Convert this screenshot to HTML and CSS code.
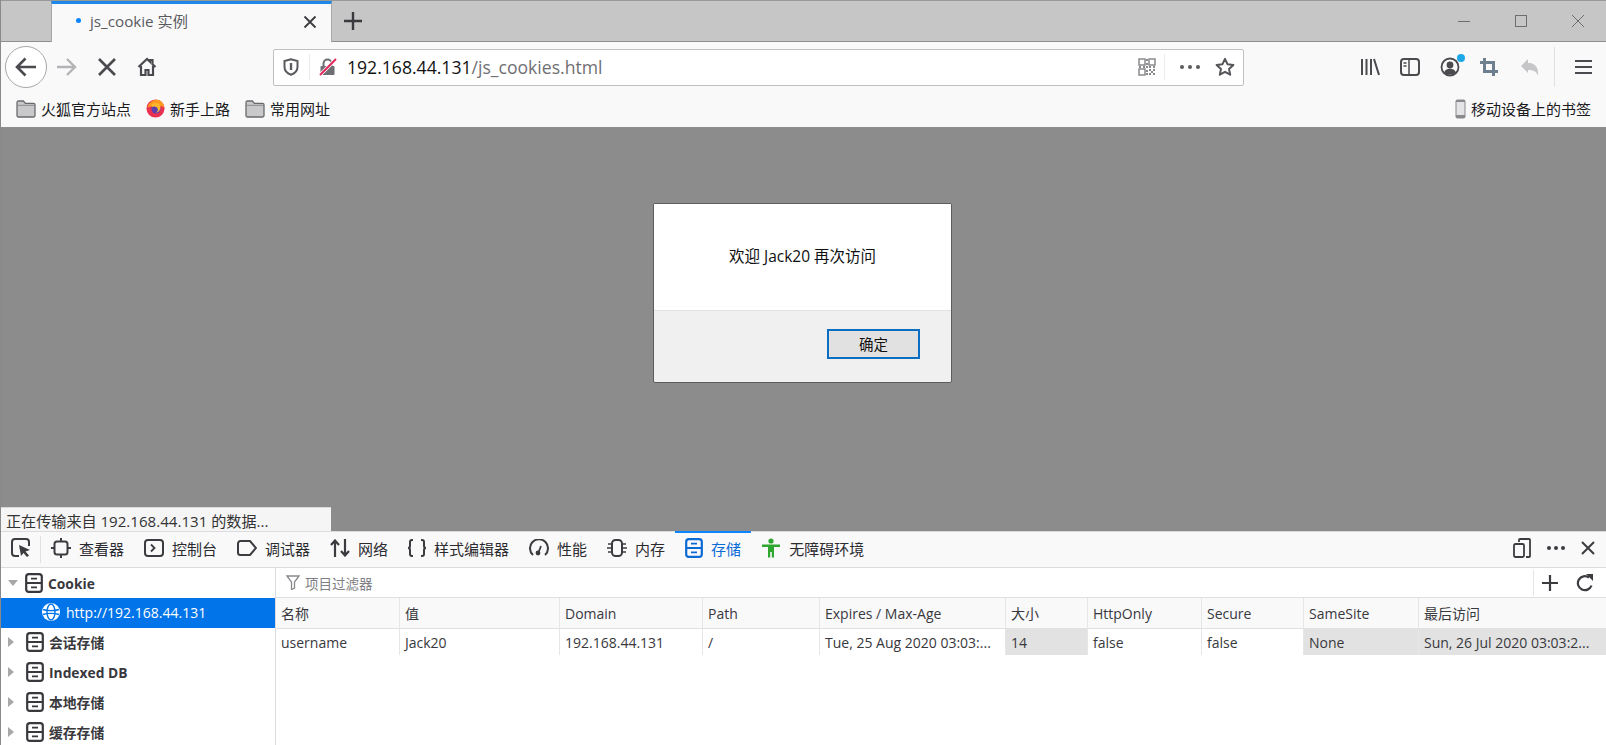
FILE: index.html
```html
<!DOCTYPE html>
<html lang="zh-CN">
<head>
<meta charset="utf-8">
<title>js_cookie 实例</title>
<link rel="stylesheet" href="styles.css">
</head>
<body>
<svg class="defs" width="0" height="0">
  <symbol id="store" viewBox="0 0 18 20"><rect x="1.2" y="1.2" width="15.6" height="17.6" rx="2.6" fill="none" stroke="currentColor" stroke-width="2.2"/><path d="M1 10h16M6 5.6h6M6 14.4h6" fill="none" stroke="currentColor" stroke-width="1.8"/></symbol>
  <symbol id="folder" viewBox="0 0 20 18"><path d="M1 4V2.4C1 1.6 1.6 1 2.4 1h5l2 2.4h8.200c.8 0 1.400.6 1.400 1.400V15.600c0 .8-.6 1.400-1.400 1.400H2.400C1.600 17 1 16.400 1 15.600Z" fill="#c9c9cb" stroke="#6a6a6e" stroke-width="1.300"/><path d="M1.500 5.300h17" stroke="#8b8b8f" stroke-width="1"/></symbol>
</svg>
<div class="window">
  <header class="tabstrip">
    <div class="tab">
      <span class="tab-dot"></span>
      <span class="tab-title">js_cookie 实例</span>
      <svg class="tab-close" width="14" height="14" viewBox="0 0 14 14"><path d="M1.500 1.500l11 11M12.500 1.500l-11 11" stroke="#3c3c40" stroke-width="1.800"/></svg>
    </div>
    <svg class="newtab" width="18" height="18" viewBox="0 0 18 18"><path d="M9 0v18M0 9h18" stroke="#3a3a3e" stroke-width="2.400"/></svg>
    <div class="winctl">
      <svg width="14" height="14" viewBox="0 0 14 14"><path d="M1 7.500h12" stroke="#6d6d6d" stroke-width="1"/></svg>
      <svg width="14" height="14" viewBox="0 0 14 14"><rect x="1.500" y="1.500" width="11" height="11" fill="none" stroke="#6d6d6d"/></svg>
      <svg width="14" height="14" viewBox="0 0 14 14"><path d="M1 1l12 12M13 1L1 13" stroke="#6d6d6d" stroke-width="1"/></svg>
    </div>
  </header>

  <nav class="navbar">
    <div class="back"><svg width="24" height="22" viewBox="0 0 24 22"><path d="M22 11H3M11.500 2.500L3 11l8.500 8.500" fill="none" stroke="#4a4a4f" stroke-width="2.600"/></svg></div>
    <svg class="nav-forward" width="22" height="20" viewBox="0 0 22 20"><path d="M1 10h18M11 2l8 8-8 8" fill="none" stroke="#b4b4b6" stroke-width="2.400"/></svg>
    <svg class="nav-stop" width="18" height="18" viewBox="0 0 18 18"><path d="M1 1l16 16M17 1L1 17" stroke="#4a4a4f" stroke-width="2.600"/></svg>
    <svg class="nav-home" width="20" height="20" viewBox="0 0 20 20"><path d="M1.500 10L10 2l3 2.800V3h2.500v4.200L18.500 10M4 9v9h4.500v-5h3v5H16V9" fill="none" stroke="#4a4a4f" stroke-width="2.200"/></svg>
    <div class="urlbar">
      <svg class="url-shield" width="16" height="18" viewBox="0 0 16 18"><path d="M8 1.200L1.500 3v6c0 3.800 3 6.500 6.500 7.800 3.500-1.300 6.500-4 6.500-7.800V3Z" fill="none" stroke="#5b5b5f" stroke-width="2"/><path d="M8 5v7" stroke="#5b5b5f" stroke-width="2.400"/></svg>
      <i class="url-sep"></i>
      <svg class="url-lock" width="18" height="18" viewBox="0 0 18 18"><rect x="1.500" y="8" width="14" height="9" rx="1" fill="#6f6f73"/><path d="M4.500 8V5.500a4 4 0 0 1 8 0V8" fill="none" stroke="#6f6f73" stroke-width="2"/><path d="M1 17L17 1" stroke="#fff" stroke-width="3.500"/><path d="M1 17L17 1" stroke="#e0255a" stroke-width="2"/></svg>
      <span class="url-text"><span class="url-host">192.168.44.131</span>/js_cookies.html</span>
      <svg class="url-qr" width="18" height="18" viewBox="0 0 18 18"><path d="M1 1h6v6H1zM11 1h6v6h-6zM1 11h6v6H1z" fill="none" stroke="#8a8a8e" stroke-width="1.500"/><path d="M8 1h2v2H8zM8 5h2v2H8zM1 8h2v2H1zM5 8h2v2H5zM8 8h2v2H8zM11 8h2v2h-2zM15 8h2v2h-2zM8 12h2v2H8zM8 15h2v2H8zM11 11h2v2h-2zM15 11h2v2h-2zM13 13h2v2h-2zM11 15h2v2h-2zM15 15h2v2h-2z" fill="#8a8a8e"/></svg>
      <i class="url-sep2"></i>
      <svg class="url-dots" width="20" height="4" viewBox="0 0 20 4"><circle cx="2" cy="2" r="2" fill="#5b5b5f"/><circle cx="10" cy="2" r="2" fill="#5b5b5f"/><circle cx="18" cy="2" r="2" fill="#5b5b5f"/></svg>
      <svg class="url-star" width="20" height="20" viewBox="0 0 20 20"><path d="M10 1.800l2.500 5.400 5.900.7-4.400 4 1.200 5.800L10 14.800l-5.200 2.900L6 11.900l-4.400-4 5.900-.7Z" fill="none" stroke="#55555a" stroke-width="2" stroke-linejoin="round"/></svg>
    </div>
    <div class="nav-right">
      <svg width="20" height="18" viewBox="0 0 20 18"><path d="M2 1v16M6.500 1v16M11 1v16M14 1l5 16" stroke="#4a4a4f" stroke-width="2"/></svg>
      <svg width="20" height="18" viewBox="0 0 20 18"><rect x="1" y="1" width="18" height="16" rx="3" fill="none" stroke="#4a4a4f" stroke-width="2"/><path d="M9 1v16" stroke="#4a4a4f" stroke-width="1.500"/><path d="M3.500 5h3M3.500 8h3" stroke="#4a4a4f" stroke-width="1.500"/></svg>
      <span class="acct"><svg width="20" height="20" viewBox="0 0 20 20"><circle cx="10" cy="10" r="8.500" fill="none" stroke="#4a4a4f" stroke-width="1.800"/><circle cx="10" cy="8" r="3.400" fill="#4a4a4f"/><path d="M4 15.500c1-3 3.500-3.800 6-3.800s5 .8 6 3.800l-3 2h-6Z" fill="#4a4a4f"/></svg><i class="acct-dot"></i></span>
      <svg width="18" height="18" viewBox="0 0 18 18"><path d="M4.500 0v13.500H18M0 4.500h13.500V18" fill="none" stroke="#6e7f90" stroke-width="3"/></svg>
      <svg class="nav-undo" width="18" height="17" viewBox="0 0 18 17"><path d="M0 7l7-7v4c6 0 11 3 10 13-1-4-4-6-10-6v3Z" fill="#c6c6c8"/></svg>
      <i class="nav-sep"></i>
      <svg class="nav-menu" width="17" height="16" viewBox="0 0 17 16"><path d="M0 2h17M0 8h17M0 14h17" stroke="#4a4a4f" stroke-width="2.200"/></svg>
    </div>
  </nav>

  <div class="bookmarks">
    <div class="bm bm-a"><svg width="20" height="18"><use href="#folder"/></svg>火狐官方站点</div>
    <div class="bm bm-b"><svg width="19" height="19" viewBox="0 0 20 20"><circle cx="10" cy="10" r="9.500" fill="#e8324f"/><path d="M1.500 9C3 3 8 .5 12 .7c4 .5 7 4 7.300 8.300-2-2-3.500-1-5.300-2-2-1.500-3-1-4.500-.5Z" fill="#ff9a1f"/><circle cx="10.500" cy="10.500" r="4.800" fill="#5a3fb0"/><path d="M6 6c3-3 8-2 9 1 1 3-1 7-5 7.500 3-1 3-4 1.500-5.500C10 7.500 8 7.500 6 8.500Z" fill="#ffb62e"/></svg>新手上路</div>
    <div class="bm bm-c"><svg width="20" height="18"><use href="#folder"/></svg>常用网址</div>
    <div class="bm bm-d"><svg width="11" height="20" viewBox="0 0 11 20"><rect x="0.500" y="0.500" width="10" height="19" rx="2" fill="#8a8a8e"/><rect x="1.500" y="3" width="8" height="13" fill="#e4e4e6"/></svg>移动设备上的书签</div>
  </div>

  <main class="content">
    <div class="dialog">
      <div class="dialog-msg">欢迎 Jack20 再次访问</div>
      <div class="dialog-foot"><button class="dialog-btn" type="button">确定</button></div>
    </div>
    <div class="status">正在传输来自 192.168.44.131 的数据...</div>
  </main>

  <section class="devtools">
    <div class="dt-toolbar">
      <div class="dt-pick"><svg width="20" height="20" viewBox="0 0 20 20"><path d="M8 18H4a3 3 0 0 1-3-3V4a3 3 0 0 1 3-3h11a3 3 0 0 1 3 3v4" fill="none" stroke="#3c3c40" stroke-width="2"/><path d="M8 7l11 5-4.500 1.500 3.500 4-2 1.500-3.500-4L10 18Z" fill="#3c3c40"/></svg></div>
      <div class="dt-tab"><svg width="20" height="20" viewBox="0 0 20 20"><rect x="3.500" y="3.500" width="13" height="13" rx="2.500" fill="none" stroke="#3c3c40" stroke-width="2"/><path d="M10 0v3M10 17v3M0 10h3M17 10h3" stroke="#3c3c40" stroke-width="2"/></svg>查看器</div>
      <div class="dt-tab"><svg width="20" height="18" viewBox="0 0 20 18"><rect x="1" y="1" width="18" height="16" rx="3" fill="none" stroke="#3c3c40" stroke-width="2"/><path d="M7 5.500L10.500 9 7 12.500" fill="none" stroke="#3c3c40" stroke-width="1.800"/></svg>控制台</div>
      <div class="dt-tab"><svg width="20" height="16" viewBox="0 0 20 16"><path d="M3.500 1H13l6 7-6 7H3.500A2.500 2.500 0 0 1 1 12.500v-9A2.500 2.500 0 0 1 3.500 1Z" fill="none" stroke="#3c3c40" stroke-width="2"/></svg>调试器</div>
      <div class="dt-tab"><svg width="20" height="18" viewBox="0 0 20 18"><path d="M5 18V2M1 6l4-4.500L9 6M15 0v16M11 12l4 4.500 4-4.500" fill="none" stroke="#3c3c40" stroke-width="2.200"/></svg>网络</div>
      <div class="dt-tab dt-braces"><svg width="20" height="18" viewBox="0 0 20 18"><path d="M6 1H5C3.500 1 3 2 3 3v4c0 1-1 2-2 2 1 0 2 1 2 2v4c0 1 .5 2 2 2h1M14 1h1c1.500 0 2 1 2 2v4c0 1 1 2 2 2-1 0-2 1-2 2v4c0 1-.5 2-2 2h-1" fill="none" stroke="#3c3c40" stroke-width="2"/></svg>样式编辑器</div>
      <div class="dt-tab"><svg width="20" height="18" viewBox="0 0 20 18"><path d="M4 16A9 9 0 1 1 16 16" fill="none" stroke="#3c3c40" stroke-width="2"/><circle cx="9" cy="14" r="2.400" fill="#3c3c40"/><path d="M9.500 13.500L12 7" stroke="#3c3c40" stroke-width="1.800"/></svg>性能</div>
      <div class="dt-tab"><svg width="20" height="18" viewBox="0 0 20 18"><rect x="5" y="1" width="10" height="16" rx="3.500" fill="none" stroke="#3c3c40" stroke-width="2"/><path d="M1 5h3M0 9h4M1 13h3M16 5h3M16 9h4M16 13h3" stroke="#3c3c40" stroke-width="1.500"/></svg>内存</div>
      <div class="dt-tab is-active"><svg width="18" height="20"><use href="#store"/></svg>存储</div>
      <div class="dt-tab"><svg width="20" height="20" viewBox="0 0 20 20"><circle cx="10" cy="3" r="2.600" fill="#2fa62f"/><path d="M1 6.500h18v2.500h-6v10.500H10.800V14H9.200v5.500H7V9H1Z" fill="#2fa62f"/></svg>无障碍环境</div>
      <div class="dt-right">
        <svg width="18" height="20" viewBox="0 0 18 20"><path d="M6 4V2a1 1 0 0 1 1-1h9a1 1 0 0 1 1 1v16a1 1 0 0 1-1 1h-3" fill="none" stroke="#3c3c40" stroke-width="1.800"/><rect x="1" y="6" width="10" height="13" rx="1.500" fill="none" stroke="#3c3c40" stroke-width="1.800"/></svg>
        <svg width="18" height="4" viewBox="0 0 18 4"><circle cx="2" cy="2" r="2" fill="#3c3c40"/><circle cx="9" cy="2" r="2" fill="#3c3c40"/><circle cx="16" cy="2" r="2" fill="#3c3c40"/></svg>
        <svg width="14" height="14" viewBox="0 0 14 14"><path d="M1 1l12 12M13 1L1 13" stroke="#3c3c40" stroke-width="2"/></svg>
      </div>
    </div>
    <div class="dt-body">
      <aside class="tree">
        <div class="tree-row tree-first"><i class="tw tw-open"></i><svg width="18" height="20"><use href="#store"/></svg><b>Cookie</b></div>
        <div class="tree-row tree-sel"><svg width="20" height="20" viewBox="0 0 20 20"><circle cx="10" cy="10" r="9" fill="#fff"/><g fill="none" stroke="#0074e8" stroke-width="1.400"><ellipse cx="10" cy="10" rx="4" ry="8"/><path d="M2 7.500c4 1.500 12 1.500 16 0M2 12.500c4-1.500 12-1.500 16 0"/></g></svg><span>http://192.168.44.131</span></div>
        <div class="tree-row"><i class="tw"></i><svg width="18" height="20"><use href="#store"/></svg><b>会话存储</b></div>
        <div class="tree-row"><i class="tw"></i><svg width="18" height="20"><use href="#store"/></svg><b>Indexed DB</b></div>
        <div class="tree-row"><i class="tw"></i><svg width="18" height="20"><use href="#store"/></svg><b>本地存储</b></div>
        <div class="tree-row"><i class="tw"></i><svg width="18" height="20"><use href="#store"/></svg><b>缓存存储</b></div>
      </aside>
      <div class="panel">
        <div class="filter">
          <svg width="14" height="15" viewBox="0 0 14 15"><path d="M1 1h12L8.500 7v6l-3 1.500V7Z" fill="none" stroke="#8a8a8e" stroke-width="1.300"/></svg>
          <span class="filter-text">项目过滤器</span>
          <div class="filter-actions">
            <svg width="18" height="18" viewBox="0 0 18 18"><path d="M9 1v16M1 9h16" stroke="#3c3c40" stroke-width="2.200"/></svg>
            <svg width="18" height="18" viewBox="0 0 18 18"><path d="M15.500 11.500A7 7 0 1 1 13 3.500" fill="none" stroke="#3c3c40" stroke-width="2.200"/><path d="M10 0h7v7Z" fill="#3c3c40"/></svg>
          </div>
        </div>
        <div class="table">
          <div class="th">名称</div><div class="th">值</div><div class="th">Domain</div><div class="th">Path</div><div class="th">Expires / Max-Age</div><div class="th">大小</div><div class="th">HttpOnly</div><div class="th">Secure</div><div class="th">SameSite</div><div class="th">最后访问</div>
          <div class="td">username</div><div class="td">Jack20</div><div class="td">192.168.44.131</div><div class="td">/</div><div class="td">Tue, 25 Aug 2020 03:03:...</div><div class="td td-hl">14</div><div class="td">false</div><div class="td">false</div><div class="td td-hl">None</div><div class="td td-hl">Sun, 26 Jul 2020 03:03:2...</div>
        </div>
      </div>
    </div>
  </section>
</div>
</body>
</html>
```

FILE: styles.css
```css
* { box-sizing: border-box; }
html, body { margin: 0; padding: 0; background: #fff; }
.defs { position: absolute; }
svg { display: block; flex: none; }
body { font-family: "Open Sans", "Noto Sans CJK SC", sans-serif; color: #1b1b1d; }
.window { width: 1606px; height: 745px; display: flex; flex-direction: column; overflow: hidden; border-left: 1px solid #8a8a8a; }

.tabstrip { height: 42px; flex: none; display: flex; align-items: center; background: #c6c6c6; border-top: 1px solid #999; border-bottom: 1px solid #8f8f8f; }
.tab { width: 281px; height: 41px; margin-left: 50px; margin-bottom: -1px; flex: none; display: flex; align-items: center; background: #f9f9fa; border-top: 3px solid #1e88e8; border-left: 1px solid #a9a9a9; border-right: 1px solid #a9a9a9; padding-left: 24px; padding-bottom: 6px; }
.tab-dot { width: 5px; height: 5px; border-radius: 50%; background: #0a84ff; margin-right: 9px; }
.tab-title { font-size: 15.200px; color: #5a5a5e; }
.tab-close { margin-left: auto; margin-right: 14px; margin-top: 4px; }
.newtab { margin-left: 12px; }
.winctl { margin-left: auto; display: flex; gap: 43px; padding-right: 21px; }

.navbar { height: 46px; flex: none; display: flex; align-items: center; background: #f9f9fa; padding-top: 4px; }
.back { width: 42px; height: 42px; margin-left: 4px; flex: none; display: flex; align-items: center; justify-content: center; border: 1px solid #a8a8a8; border-radius: 50%; background: #fff; }
.nav-forward { margin-left: 9px; }
.nav-stop { margin-left: 20px; }
.nav-home { margin-left: 21px; }
.urlbar { width: 971px; height: 37px; margin-left: 116px; flex: none; display: flex; align-items: center; background: #fff; border: 1px solid #c0c0c2; border-radius: 2px; }
.url-shield { margin-left: 9px; }
.url-sep { width: 1px; height: 26px; margin-left: 10px; background: #ececee; }
.url-lock { margin-left: 9px; }
.url-text { margin-left: 10px; font-size: 17.600px; color: #6f6f73; }
.url-host { color: #111; }
.url-qr { margin-left: auto; }
.url-sep2 { width: 1px; height: 26px; margin-left: 8px; background: #ececee; }
.url-dots { margin-left: 15px; }
.url-star { margin-left: 15px; margin-right: 8px; }
.nav-right { flex: 1; display: flex; align-items: center; padding-left: 116px; gap: 20px; }
.acct { position: relative; display: block; }
.acct-dot { position: absolute; top: -3px; right: -5px; width: 8px; height: 8px; border-radius: 50%; background: #1fa8e8; }
.nav-undo { margin-left: 3px; }
.nav-sep { width: 1px; height: 40px; background: #e0e0e2; margin-left: -5px; }

.bookmarks { height: 40px; flex: none; display: flex; align-items: center; background: #f9f9fa; font-size: 15px; border-bottom: 1px solid #8e8e8e; padding-top: 2px; }
.bm { display: flex; align-items: center; gap: 5px; color: #1b1b1d; }
.bm-a { margin-left: 15px; }
.bm-b { margin-left: 15px; }
.bm-c { margin-left: 15px; }
.bm-d { margin-left: auto; margin-right: 15px; gap: 5px; }

.content { height: 403px; flex: none; position: relative; display: flex; justify-content: center; background: #8c8c8c; }
.dialog { width: 299px; height: 180px; margin-top: 75px; margin-right: 2px; display: flex; flex-direction: column; background: #f0f0f0; border: 1px solid #5c5c5c; border-radius: 2px; overflow: hidden; }
.dialog-msg { height: 107px; flex: none; display: flex; align-items: center; justify-content: center; background: #fff; border-bottom: 1px solid #e2e2e2; font-size: 15.500px; color: #111; padding-bottom: 4px; }
.dialog-foot { flex: 1; display: flex; align-items: flex-start; justify-content: flex-end; padding: 18px 31px 0 0; }
.dialog-btn { width: 93px; height: 30px; padding: 0 0 2px; background: #e1e1e1; border: 2px solid #0a6fc2; font-family: inherit; font-size: 14.500px; color: #111; }
.status { position: absolute; left: -1px; bottom: 0; width: 331px; height: 24px; display: flex; align-items: center; padding-left: 6px; background: #f5f5f5; border-top: 1px solid #d8d8d8; font-size: 15.100px; color: #333; }

.devtools { flex: 1; display: flex; flex-direction: column; min-height: 0; background: #fff; }
.dt-toolbar { height: 37px; flex: none; display: flex; align-items: stretch; background: #f9f9fa; border-top: 1px solid #dcdcdf; border-bottom: 1px solid #dcdcdf; font-size: 15px; color: #2b2b2f; padding-bottom: 3px; }
.dt-pick { width: 40px; flex: none; display: flex; align-items: center; padding-left: 10px; position: relative; }
.dt-pick::after { content: ""; position: absolute; right: 0; top: 4px; bottom: 1px; width: 1px; background: #e0e0e2; }
.dt-tab { display: flex; align-items: center; gap: 8px; padding: 0 10px; color: #2b2b2f; }
.dt-braces { margin-left: -1px; gap: 7px; }
.is-active { color: #0a6ad6; border-top: 2px solid #0a84ff; margin-top: -1px; padding-bottom: 1px; }
.dt-right { margin-left: auto; display: flex; align-items: center; gap: 16px; padding-right: 11px; }

.dt-body { flex: 1; display: flex; min-height: 0; }
.tree { width: 275px; flex: none; border-right: 1px solid #dcdcdf; overflow: hidden; }
.tree-row { height: 30px; display: flex; align-items: center; gap: 5px; padding-left: 7px; padding-bottom: 2px; font-size: 13.800px; color: #38383d; }
.tree-first { padding-bottom: 0; }
.tree-row b { font-weight: 700; }
.tree-sel { background: #0074e8; color: #fff; padding-left: 40px; font-size: 14px; }
.tw { width: 0; height: 0; margin-right: 7px; border-left: 6px solid #a8a8aa; border-top: 5px solid transparent; border-bottom: 5px solid transparent; }
.tw.tw-open { border-top: 6px solid #a8a8aa; border-bottom: 0; border-left: 5px solid transparent; border-right: 5px solid transparent; margin-right: 2px; }

.panel { flex: 1; min-width: 0; display: flex; flex-direction: column; }
.filter { height: 30px; flex: none; display: flex; align-items: center; padding-left: 10px; border-bottom: 1px solid #e0e0e2; }
.filter-text { margin-left: 5px; font-size: 13.500px; color: #808084; }
.filter-actions { margin-left: auto; display: flex; align-items: center; gap: 17px; padding: 4px 12px 4px 7px; border-left: 1px solid #e6e6e8; }
.table { display: grid; grid-template-columns: 123px 160px 143px 117px 186px 82px 114px 102px 115px 1fr; grid-template-rows: 31px 26px; font-size: 14px; color: #38383d; }
.th { display: flex; align-items: center; padding-left: 5px; background: #f9f9fa; border-bottom: 1px solid #e0e0e2; border-left: 1px solid #e6e6e8; white-space: nowrap; }
.th:first-child { border-left: 0; }
.td { display: flex; align-items: center; padding-left: 5px; border-left: 1px solid #e6e6e8; white-space: nowrap; overflow: hidden; }
.td:nth-child(11) { border-left: 0; }
.td-hl { background: #e2e2e2; }
```
